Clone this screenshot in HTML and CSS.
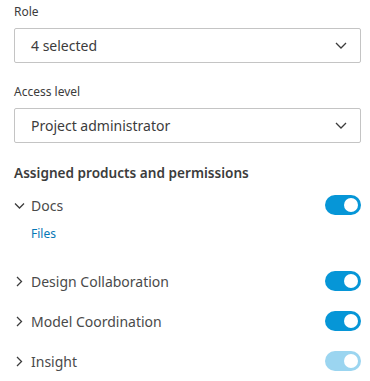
FILE: index.html
```html
<!DOCTYPE html>
<html lang="en">
<head>
    <meta charset="UTF-8">
    <title>Member permissions</title>
    <link rel="stylesheet" href="styles.css">
</head>
<body>
    <div class="panel">
        <div class="field">
            <label class="field-label">Role</label>
            <div class="select">
                <span>4 selected</span>
                <svg class="caret" width="12" height="7" viewBox="0 0 12 7"><path d="M1 1l5 5 5-5" fill="none" stroke="#3c3c3c" stroke-width="1.3"/></svg>
            </div>
        </div>

        <div class="field">
            <label class="field-label">Access level</label>
            <div class="select">
                <span>Project administrator</span>
                <svg class="caret" width="12" height="7" viewBox="0 0 12 7"><path d="M1 1l5 5 5-5" fill="none" stroke="#3c3c3c" stroke-width="1.3"/></svg>
            </div>
        </div>

        <h2 class="section-title">Assigned products and permissions</h2>

        <div class="product open">
            <div class="product-row">
                <svg class="arrow" width="11" height="11" viewBox="0 0 11 11"><path d="M1 3.5l4.5 4.5 4.5-4.5" fill="none" stroke="#3c3c3c" stroke-width="1.3"/></svg>
                <span class="product-name">Docs</span>
                <span class="toggle on"></span>
            </div>
            <a class="sub-link" href="#">Files</a>
        </div>

        <div class="product">
            <div class="product-row">
                <svg class="arrow" width="11" height="11" viewBox="0 0 11 11"><path d="M3 1l4.5 4.5-4.5 4.5" fill="none" stroke="#3c3c3c" stroke-width="1.3"/></svg>
                <span class="product-name">Design Collaboration</span>
                <span class="toggle on"></span>
            </div>
        </div>

        <div class="product">
            <div class="product-row">
                <svg class="arrow" width="11" height="11" viewBox="0 0 11 11"><path d="M3 1l4.5 4.5-4.5 4.5" fill="none" stroke="#3c3c3c" stroke-width="1.3"/></svg>
                <span class="product-name">Model Coordination</span>
                <span class="toggle on"></span>
            </div>
        </div>

        <div class="product">
            <div class="product-row">
                <svg class="arrow" width="11" height="11" viewBox="0 0 11 11"><path d="M3 1l4.5 4.5-4.5 4.5" fill="none" stroke="#3c3c3c" stroke-width="1.3"/></svg>
                <span class="product-name">Insight</span>
                <span class="toggle on disabled"></span>
            </div>
        </div>
    </div>
</body>
</html>
```

FILE: styles.css
```css
body {
    margin: 0;
    font-family: "Noto Sans", sans-serif;
    color: #3c3c3c;
    background: #fff;
}
.panel {
    padding: 3px 9px 0 14px;
}
.field {
    margin-bottom: 20px;
}
.field-label {
    display: block;
    font-size: 12px;
    line-height: 17px;
    margin-bottom: 8px;
}
.select {
    display: flex;
    align-items: center;
    justify-content: space-between;
    height: 35px;
    box-sizing: border-box;
    border: 1px solid #c4c4c4;
    border-radius: 2px;
    padding: 0 13px 0 16px;
    font-size: 14px;
}
.caret {
    display: block;
}
.section-title {
    font-size: 13.6px;
    font-weight: 600;
    margin: 19px 0 12px;
    line-height: 20px;
}
.product {
    margin-bottom: 20px;
}
.product.open {
    margin-bottom: 29px;
}
.product-row {
    display: flex;
    align-items: center;
    height: 20px;
}
.arrow {
    margin-right: 6px;
}
.product-name {
    flex: 1;
    font-size: 14px;
    color: #4a4a4a;
}
.sub-link {
    display: block;
    margin: 10px 0 0 17px;
    font-size: 12px;
    color: #0677b6;
    text-decoration: none;
}
.toggle {
    width: 36px;
    height: 20px;
    border-radius: 10px;
    background: #0696d7;
    position: relative;
}
.toggle::after {
    content: "";
    position: absolute;
    top: 3px;
    right: 3px;
    width: 14px;
    height: 14px;
    border-radius: 50%;
    background: #fff;
}
.toggle.disabled {
    background: #9bd5f0;
}
```
